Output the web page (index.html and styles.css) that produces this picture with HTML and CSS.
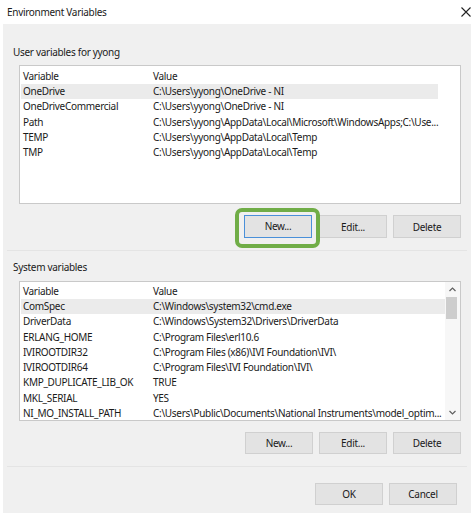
FILE: index.html
```html
<!DOCTYPE html>
<html lang="en">
<head>
    <meta charset="UTF-8">
    <title>Environment Variables</title>
    <link rel="stylesheet" href="styles.css">
</head>
<body>
    <div class="window">
        <div class="titlebar">
            <span class="title">Environment Variables</span>
            <svg class="close" width="10" height="10" viewBox="0 0 10 10">
                <path d="M0.5 0.5 L9.5 9.5 M9.5 0.5 L0.5 9.5" stroke="#222" stroke-width="1.1" fill="none"/>
            </svg>
        </div>

        <div class="dialog">
            <div class="group group-user">
                <div class="group-label">User variables for yyong</div>
                <div class="list list-user">
                    <div class="rows">
                        <div class="row head"><span class="col-var">Variable</span><span class="col-val">Value</span></div>
                        <div class="row selected"><span class="col-var">OneDrive</span><span class="col-val">C:\Users\yyong\OneDrive - NI</span></div>
                        <div class="row"><span class="col-var">OneDriveCommercial</span><span class="col-val">C:\Users\yyong\OneDrive - NI</span></div>
                        <div class="row"><span class="col-var">Path</span><span class="col-val">C:\Users\yyong\AppData\Local\Microsoft\WindowsApps;C:\Use...</span></div>
                        <div class="row"><span class="col-var">TEMP</span><span class="col-val">C:\Users\yyong\AppData\Local\Temp</span></div>
                        <div class="row"><span class="col-var">TMP</span><span class="col-val">C:\Users\yyong\AppData\Local\Temp</span></div>
                    </div>
                </div>
                <div class="buttons">
                    <div class="highlight"><button class="btn focused">New...</button></div>
                    <button class="btn">Edit...</button>
                    <button class="btn">Delete</button>
                </div>
            </div>

            <div class="group group-system">
                <div class="group-label">System variables</div>
                <div class="list list-system">
                    <div class="rows">
                        <div class="row head"><span class="col-var">Variable</span><span class="col-val">Value</span></div>
                        <div class="row selected"><span class="col-var">ComSpec</span><span class="col-val">C:\Windows\system32\cmd.exe</span></div>
                        <div class="row"><span class="col-var">DriverData</span><span class="col-val">C:\Windows\System32\Drivers\DriverData</span></div>
                        <div class="row"><span class="col-var">ERLANG_HOME</span><span class="col-val">C:\Program Files\erl10.6</span></div>
                        <div class="row"><span class="col-var">IVIROOTDIR32</span><span class="col-val">C:\Program Files (x86)\IVI Foundation\IVI\</span></div>
                        <div class="row"><span class="col-var">IVIROOTDIR64</span><span class="col-val">C:\Program Files\IVI Foundation\IVI\</span></div>
                        <div class="row"><span class="col-var">KMP_DUPLICATE_LIB_OK</span><span class="col-val">TRUE</span></div>
                        <div class="row"><span class="col-var">MKL_SERIAL</span><span class="col-val">YES</span></div>
                        <div class="row"><span class="col-var">NI_MO_INSTALL_PATH</span><span class="col-val">C:\Users\Public\Documents\National Instruments\model_optim...</span></div>
                    </div>
                    <div class="scrollbar">
                        <svg class="arrow" width="15" height="15" viewBox="0 0 15 15">
                            <path d="M4.5 9 L7.5 6 L10.5 9" stroke="#606060" stroke-width="1.2" fill="none"/>
                        </svg>
                        <div class="track"><div class="thumb"></div></div>
                        <svg class="arrow" width="15" height="15" viewBox="0 0 15 15">
                            <path d="M4.5 6 L7.5 9 L10.5 6" stroke="#606060" stroke-width="1.2" fill="none"/>
                        </svg>
                    </div>
                </div>
                <div class="buttons">
                    <button class="btn">New...</button>
                    <button class="btn">Edit...</button>
                    <button class="btn">Delete</button>
                </div>
            </div>

            <div class="footer">
                <button class="btn">OK</button>
                <button class="btn">Cancel</button>
            </div>
        </div>
    </div>
</body>
</html>
```

FILE: styles.css
```css
body {
    margin: 0;
    padding: 0;
    background-color: #ffffff;
    color: #1a1a1a;
    font-family: "Noto Sans", "Open Sans", sans-serif;
    font-size: 10px;
    letter-spacing: -0.3px;
}
.window {
    width: 474px;
    height: 516px;
    display: flex;
    flex-direction: column;
}
.titlebar {
    height: 24px;
    display: flex;
    align-items: center;
    justify-content: space-between;
    padding: 0 3px 0 7px;
}
.dialog {
    flex: 1;
    margin: 0 3px 3px;
    background-color: #f0f0f0;
    padding-top: 21px;
    display: flex;
    flex-direction: column;
}
.group {
    margin: 0 4px;
    border-bottom: 1px solid #e4e4e4;
}
.group-label {
    line-height: 14px;
    height: 14px;
    padding-left: 6px;
}
.list {
    margin: 6px 6px 0 12px;
    background-color: #ffffff;
    border: 1px solid #c9c9c9;
    display: flex;
    overflow: hidden;
}
.list-user {
    height: 137px;
}
.list-system {
    margin-top: 7px;
    height: 138px;
}
.rows {
    flex: 1;
    padding-top: 2px;
}
.list-system .rows {
    padding-top: 1px;
}
.row {
    display: flex;
    height: 15.3px;
    line-height: 15.3px;
    margin: 0 0 0 1px;
    white-space: nowrap;
}
.list-user .row {
    margin-right: 24px;
}
.row.head {
    height: 16px;
    line-height: 16px;
}
.row.selected {
    background-color: #ebebeb;
}
.col-var {
    width: 127px;
    padding-left: 2px;
    flex-shrink: 0;
}
.col-val {
    padding-left: 3px;
}
.scrollbar {
    width: 15px;
    display: flex;
    flex-direction: column;
    background-color: #f7f7f7;
}
.arrow {
    display: block;
    flex-shrink: 0;
}
.track {
    flex: 1;
    padding: 0 3px 0 1px;
}
.thumb {
    height: 22px;
    background-color: #cdcdcd;
}
.buttons {
    display: flex;
    justify-content: flex-end;
    align-items: center;
    gap: 6px;
    margin: 11px 6px 12px 0;
    height: 23px;
}
.group-system {
    padding-top: 9px;
}
.group-system .buttons {
    margin-top: 11px;
    margin-bottom: 12px;
    height: 22px;
}
.group-system .btn {
    height: 22px;
}
.btn {
    width: 68px;
    height: 23px;
    padding: 0;
    font-family: inherit;
    font-size: 10px;
    letter-spacing: -0.3px;
    color: #1a1a1a;
    background-color: #e3e3e3;
    border: 1px solid #d0d0d0;
}
.btn.focused {
    border-color: #4a90d9;
}
/* green ring drawn round the New button */
.highlight {
    margin: -8px -7px -10px -9px;
    padding: 3px 4px 6px 5px;
    border: 4px solid #70ad47;
    border-radius: 7px;
    position: relative;
    background-color: #f0f0f0;
}
.footer {
    display: flex;
    justify-content: flex-end;
    gap: 6px;
    padding: 16px 14px 0 0;
}
.footer .btn {
    height: 22px;
}
```
